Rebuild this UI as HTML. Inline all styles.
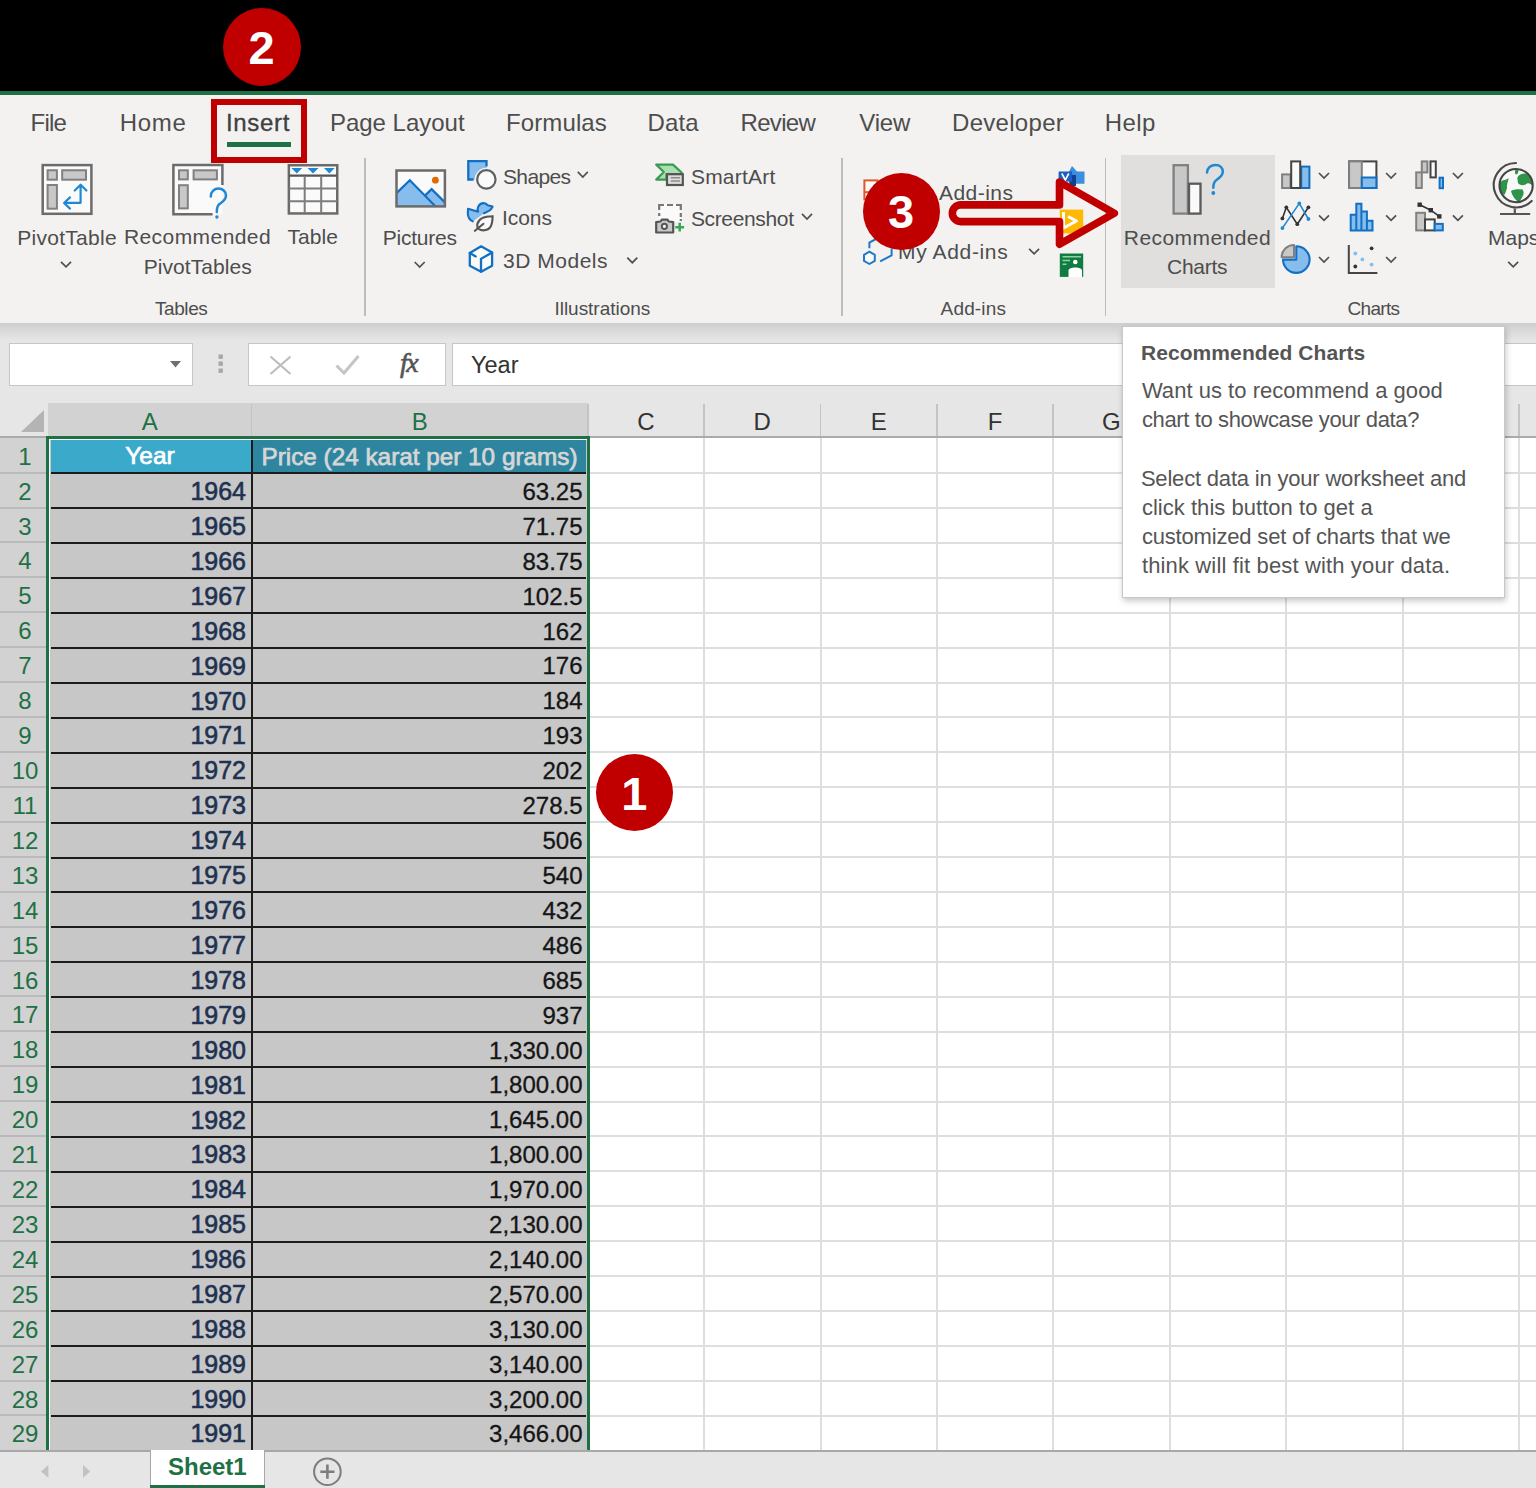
<!DOCTYPE html>
<html><head><meta charset="utf-8"><style>
html,body{margin:0;padding:0;}
body{width:1536px;height:1488px;position:relative;overflow:hidden;background:#fff;font-family:"Liberation Sans", sans-serif;}
body>div{position:absolute;}
</style></head><body>
<div style="left:0px;top:0px;width:1536px;height:91px;background:#000"></div><div style="left:0px;top:91px;width:1536px;height:4px;background:#1e7145"></div><div style="left:0px;top:95px;width:1536px;height:228px;background:#f3f2f1"></div><div style="left:0px;top:323px;width:1536px;height:80px;background:#e6e6e6"></div><div style="left:0px;top:323px;width:1536px;height:1px;background:#d0d0d0"></div><div style="left:0px;top:324px;width:1536px;height:16px;background:linear-gradient(#cfcfcf,#e6e6e6)"></div><div style="left:30.6px;top:110.68px;font-size:24px;line-height:24px;color:#4d4d4d;font-weight:normal;white-space:pre;letter-spacing:-0.841px;">File</div><div style="left:119.7px;top:110.68px;font-size:24px;line-height:24px;color:#4d4d4d;font-weight:normal;white-space:pre;letter-spacing:0.709px;">Home</div><div style="left:226px;top:110.68px;font-size:24px;line-height:24px;color:#404040;font-weight:normal;white-space:pre;letter-spacing:0.669px;-webkit-text-stroke:0.35px #404040">Insert</div><div style="left:329.9px;top:110.68px;font-size:24px;line-height:24px;color:#4d4d4d;font-weight:normal;white-space:pre;letter-spacing:-0.011px;">Page Layout</div><div style="left:506px;top:110.68px;font-size:24px;line-height:24px;color:#4d4d4d;font-weight:normal;white-space:pre;letter-spacing:0.111px;">Formulas</div><div style="left:647.6px;top:110.68px;font-size:24px;line-height:24px;color:#4d4d4d;font-weight:normal;white-space:pre;letter-spacing:0.084px;">Data</div><div style="left:740.6px;top:110.68px;font-size:24px;line-height:24px;color:#4d4d4d;font-weight:normal;white-space:pre;letter-spacing:-0.712px;">Review</div><div style="left:859.3px;top:110.68px;font-size:24px;line-height:24px;color:#4d4d4d;font-weight:normal;white-space:pre;letter-spacing:-0.185px;">View</div><div style="left:952px;top:110.68px;font-size:24px;line-height:24px;color:#4d4d4d;font-weight:normal;white-space:pre;letter-spacing:0.3px;">Developer</div><div style="left:1104.7px;top:110.68px;font-size:24px;line-height:24px;color:#4d4d4d;font-weight:normal;white-space:pre;letter-spacing:0.396px;">Help</div><div style="left:227px;top:142px;width:64px;height:5px;background:#1e7145"></div><div style="left:363.8px;top:157.5px;width:1.8px;height:158.5px;background:#bdbcbb"></div><div style="left:841.3px;top:157.5px;width:1.8px;height:158.5px;background:#bdbcbb"></div><div style="left:1104.7px;top:157.5px;width:1.8px;height:158.5px;background:#bdbcbb"></div><div style="left:17.2px;top:226.62px;font-size:21px;line-height:21px;color:#4d4d4d;font-weight:normal;white-space:pre;letter-spacing:0.277px;">PivotTable</div><div style="left:123.9px;top:226.42px;font-size:21px;line-height:21px;color:#4d4d4d;font-weight:normal;white-space:pre;letter-spacing:0.437px;">Recommended</div><div style="left:143.7px;top:255.82px;font-size:21px;line-height:21px;color:#4d4d4d;font-weight:normal;white-space:pre;letter-spacing:0.071px;">PivotTables</div><div style="left:287.4px;top:226.42px;font-size:21px;line-height:21px;color:#4d4d4d;font-weight:normal;white-space:pre;letter-spacing:0.094px;">Table</div><div style="left:382.7px;top:226.62px;font-size:21px;line-height:21px;color:#4d4d4d;font-weight:normal;white-space:pre;letter-spacing:-0.208px;">Pictures</div><div style="left:503.0px;top:165.62px;font-size:21px;line-height:21px;color:#4d4d4d;font-weight:normal;white-space:pre;letter-spacing:-0.645px;">Shapes</div><div style="left:502px;top:207.32px;font-size:21px;line-height:21px;color:#4d4d4d;font-weight:normal;white-space:pre;letter-spacing:-0.073px;">Icons</div><div style="left:503.0px;top:249.82px;font-size:21px;line-height:21px;color:#4d4d4d;font-weight:normal;white-space:pre;letter-spacing:0.516px;">3D Models</div><div style="left:690.9px;top:165.92px;font-size:21px;line-height:21px;color:#4d4d4d;font-weight:normal;white-space:pre;letter-spacing:0.228px;">SmartArt</div><div style="left:690.9px;top:207.82px;font-size:21px;line-height:21px;color:#4d4d4d;font-weight:normal;white-space:pre;letter-spacing:-0.344px;">Screenshot</div><div style="left:938.9px;top:182.22px;font-size:21px;line-height:21px;color:#4d4d4d;font-weight:normal;white-space:pre;letter-spacing:0.483px;">Add-ins</div><div style="left:898px;top:240.52px;font-size:21px;line-height:21px;color:#4d4d4d;font-weight:normal;white-space:pre;letter-spacing:0.641px;">My Add-ins</div><div style="left:1121px;top:155px;width:154px;height:133px;background:#e1dfdd"></div><div style="left:1123.8px;top:226.62px;font-size:21px;line-height:21px;color:#4d4d4d;font-weight:normal;white-space:pre;letter-spacing:0.447px;">Recommended</div><div style="left:1167px;top:255.82px;font-size:21px;line-height:21px;color:#4d4d4d;font-weight:normal;white-space:pre;letter-spacing:-0.25px;">Charts</div><div style="left:1488px;top:226.52px;font-size:21px;line-height:21px;color:#4d4d4d;font-weight:normal;white-space:pre;">Maps</div><div style="left:154.9px;top:299.12px;font-size:19px;line-height:19px;color:#4d4d4d;font-weight:normal;white-space:pre;letter-spacing:-0.404px;">Tables</div><div style="left:554.5px;top:299.12px;font-size:19px;line-height:19px;color:#4d4d4d;font-weight:normal;white-space:pre;letter-spacing:-0.033px;">Illustrations</div><div style="left:940.6px;top:299.12px;font-size:19px;line-height:19px;color:#4d4d4d;font-weight:normal;white-space:pre;letter-spacing:0.146px;">Add-ins</div><div style="left:1347.5px;top:298.92px;font-size:19px;line-height:19px;color:#4d4d4d;font-weight:normal;white-space:pre;letter-spacing:-0.692px;">Charts</div><svg style="position:absolute;left:0;top:0" width="1536" height="1488" viewBox="0 0 1536 1488"><rect x="42.7" y="165.1" width="48.7" height="48.7" fill="#fafafa" stroke="#6b6b6b" stroke-width="2.5"/><rect x="47.6" y="170.25" width="9.3" height="9.45" fill="#c8c8c8" stroke="#808080" stroke-width="2"/><rect x="62.2" y="170.25" width="23.8" height="9.45" fill="#c8c8c8" stroke="#808080" stroke-width="2"/><rect x="47.6" y="185" width="9.3" height="23.7" fill="#c8c8c8" stroke="#808080" stroke-width="2"/><path d="M80.6 185.5 V202.8 H64.8 M74.75 190.5 L80.6 184.7 L86.4 190.5 M70 197.4 L64.1 203 L70 208.6" stroke="#1e88d4" stroke-width="2.2" fill="none" stroke-linecap="round" stroke-linejoin="round"/><rect x="173.4" y="165" width="49" height="49.2" fill="#fafafa"/><path d="M212.6 214.2 H173.4 V165 H222.4 V185" stroke="#6b6b6b" stroke-width="2.5" fill="none"/><rect x="179" y="170.3" width="8.8" height="9.1" fill="#c8c8c8" stroke="#808080" stroke-width="2"/><rect x="193.6" y="170.3" width="23.3" height="9.1" fill="#c8c8c8" stroke="#808080" stroke-width="2"/><rect x="179" y="185.2" width="8.8" height="23.2" fill="#c8c8c8" stroke="#808080" stroke-width="2"/><path d="M210.8 196.5 C210.8 191.5 214.5 188.6 218.5 188.6 C222.5 188.6 226 191.5 226 195.5 C226 200 222.5 201.8 219.5 204 C217.2 205.8 216.8 208 216.8 212" stroke="#1e88d4" stroke-width="2.5" fill="none" stroke-linecap="round"/><circle cx="216.9" cy="217" r="1.7" fill="#1e88d4"/><rect x="288.85" y="165.25" width="48.4" height="48.2" fill="#fafafa" stroke="#6b6b6b" stroke-width="2.5"/><path d="M289 175.7 H337" stroke="#555" stroke-width="2.2"/><path d="M289 188.4 H337 M289 201.3 H337 M304.7 176 V213 M321.2 176 V213" stroke="#7d7d7d" stroke-width="2"/><path d="M291.4 168 H302.2 L296.8 173.4 Z M307.6 168 H318.5 L313 173.4 Z M324 168 H334.7 L329.4 173.4 Z" fill="#1e88d4"/><rect x="396.5" y="170.5" width="48.4" height="35.9" fill="#fafafa"/><path d="M396.5 193.1 L409.8 180.2 L435.6 206.4 H396.5 Z M425.5 195.1 L431.6 189.1 L444.9 202.4 V206.4 H435.6 Z" fill="#86bdec"/><path d="M396.5 193.1 L409.8 180.2 L435.6 206.4 M425.5 195.1 L431.6 189.1 L444.9 202.4" stroke="#1170c4" stroke-width="2.2" fill="none"/><rect x="396.5" y="170.5" width="48.4" height="35.9" fill="none" stroke="#6b6b6b" stroke-width="2.5"/><circle cx="435.4" cy="180.2" r="3.4" fill="#e06a00"/><rect x="468.3" y="161.2" width="18.2" height="18.3" fill="#86bdec"/><path d="M486.5 166.5 V161.2 H468.3 V179.5 H473.6" stroke="#1170c4" stroke-width="2.3" fill="none"/><circle cx="486.35" cy="179.4" r="9.2" fill="#fafafa" stroke="#f3f2f1" stroke-width="5"/><circle cx="486.35" cy="179.4" r="9.2" fill="#fafafa" stroke="#5f5f5f" stroke-width="2.2"/><path d="M472.75 221.4 C469.5 220 467.9 217.5 467.8 213 L468.05 208.75 L478.1 211.7 C477.3 209.5 477.5 207.8 478.3 206.5 C479.5 204 481.5 203.1 483.5 203.1 C485.5 203.1 486.9 204 487.6 205.2 L492.6 206.6 C491.8 208.6 490.5 210 488.9 210.9 L484 213.2 L472.75 221.4 Z" fill="#86bdec"/><path d="M472.75 221.4 C469.5 220 467.9 217.5 467.8 213 L468.05 208.75 L478.1 211.7 C477.3 209.5 477.5 207.8 478.3 206.5 C479.5 204 481.5 203.1 483.5 203.1 C485.5 203.1 486.9 204 487.6 205.2 L492.6 206.6 C491.8 208.6 490.5 210 488.9 210.9 L484 213.2" fill="none" stroke="#1170c4" stroke-width="2.1" stroke-linejoin="round" stroke-linecap="round"/><path d="M492.6 216.3 C485.5 216.3 478.6 217.6 477.2 224.6 C476.8 228.3 479.4 230.6 484.6 230.3 C490.4 229.6 492.4 225.5 492.6 216.3 Z" fill="#fafafa" stroke="#f3f2f1" stroke-width="4"/><path d="M492.6 216.3 C485.5 216.3 478.6 217.6 477.2 224.6 C476.8 228.3 479.4 230.6 484.6 230.3 C490.4 229.6 492.4 225.5 492.6 216.3 Z M474.9 230.8 L483.5 223.8" fill="#fafafa" stroke="#555" stroke-width="2.1" stroke-linecap="round"/><path d="M481.1 246.3 L492.1 252.6 V265.8 L481.1 271.7 L469.8 265.8 V252.9 Z" fill="#fafafa" stroke="#1170c4" stroke-width="2.3" stroke-linejoin="round"/><path d="M492.1 252.6 L481 258.8 V271.7 M469.8 252.9 L475.7 256.4" stroke="#1170c4" stroke-width="2.3" fill="none" stroke-linecap="round"/><path d="M656.2 164.6 H673 L681.6 172.5 V174 H666.5 V179.6 H656.2 L663.8 172 Z" fill="#a8e0b0" stroke="#3a9a54" stroke-width="2.2" stroke-linejoin="round"/><rect x="667" y="174.2" width="15.8" height="10.8" fill="#dcdcdc" stroke="#555" stroke-width="2.2"/><path d="M670.8 177.8 H680 M670.8 181 H680" stroke="#8a8a8a" stroke-width="1.5"/><rect x="659.2" y="204" width="21.6" height="18" fill="#fafafa"/><path d="M659.2 210 V205 H664 M667 205 H673 M676 205 H680.8 V210 M659.2 213 V216 M680.8 213 V217 M680.8 219 V221" stroke="#777" stroke-width="2.2" fill="none"/><path d="M656.2 232.5 V222.2 L660.5 221.5 L661.8 219.6 H667.5 L668.8 221.5 L673.2 222.2 V232.5 Z" fill="#c8c8c8" stroke="#555" stroke-width="2.2" stroke-linejoin="round"/><circle cx="664.4" cy="226.3" r="2.6" fill="#fafafa" stroke="#555" stroke-width="2"/><path d="M675.3 227.2 H684.1 M679.7 222.8 V231.6" stroke="#3aa657" stroke-width="2.5"/><rect x="864.4" y="180.4" width="13" height="19" fill="#fafafa" stroke="#e0582a" stroke-width="2"/><path d="M864.4 192.2 H877" stroke="#e0582a" stroke-width="2"/><path d="M869.4 248.3 V242.5 L876 239 M891.6 248.6 V255.3 L880.2 261.4" stroke="#1f78c8" stroke-width="2" fill="none"/><path d="M869.4 251.7 L874.8 254.8 V260.9 L869.4 264 L864 260.9 V254.8 Z" fill="#fafafa" stroke="#1f78c8" stroke-width="2" stroke-linejoin="round"/><path d="M1072 166 L1077 171.5 H1084.5 V183.8 H1069 V171.5 Z" fill="#3b8ee0"/><path d="M1069 175 H1076 V186 H1070 Z" fill="#0f3f8f"/><rect x="1058.6" y="171.5" width="13.5" height="10" fill="#1d5fc0"/><path d="M1061.8 173.5 L1065.3 180 L1068.8 173.5" stroke="#fff" stroke-width="1.6" fill="none"/><rect x="1059.8" y="209.6" width="23.4" height="23.8" fill="#ffb900"/><path d="M1063.5 212 V228 L1076.5 221 L1068 216.5" stroke="#fff" stroke-width="3" fill="none" stroke-linejoin="round"/><rect x="1059.8" y="253.5" width="23.4" height="23.4" fill="#107c41"/><path d="M1062.5 256.8 H1081 M1062.5 260.6 H1070 M1062.5 264.2 H1066.5" stroke="#8fd1a8" stroke-width="1.5"/><circle cx="1075.3" cy="262" r="2.3" fill="#fff"/><path d="M1068.5 276.9 V270.5 C1068.5 266.5 1082 266.5 1082 270.5 V276.9 Z" fill="#fff"/><rect x="1173.6" y="165.2" width="14.3" height="48.4" fill="#c8c8c8" stroke="#808080" stroke-width="2.3"/><rect x="1189" y="183.7" width="11.5" height="29.9" fill="#fafafa" stroke="#5a5a5a" stroke-width="2.3"/><path d="M1207 172.6 C1207 168 1211 164.9 1215.5 164.9 C1220 164.9 1222.8 168 1222.8 171.8 C1222.8 176 1219 178 1216.5 180 C1213.5 182 1213.3 184.5 1213.3 187.7" stroke="#1e88d4" stroke-width="2.5" fill="none" stroke-linecap="round"/><circle cx="1213.3" cy="193" r="1.9" fill="#1e88d4"/><rect x="1282.1" y="174.4" width="8.4" height="13.6" fill="#c8c8c8" stroke="#808080" stroke-width="2"/><rect x="1301.2" y="166.6" width="8.2" height="21.4" fill="#86bdec" stroke="#1170c4" stroke-width="2"/><rect x="1291.2" y="161.4" width="9" height="26.6" fill="#fafafa" stroke="#444" stroke-width="2"/><rect x="1349.1" y="161.4" width="27.3" height="26.6" fill="#fafafa" stroke="#444" stroke-width="2"/><rect x="1349.1" y="161.4" width="12.7" height="26.6" fill="#c8c8c8" stroke="#808080" stroke-width="2"/><rect x="1361.8" y="177.5" width="14.6" height="10.5" fill="#86bdec" stroke="#1170c4" stroke-width="2"/><rect x="1421.8" y="161.4" width="5.6" height="11" fill="#c8c8c8" stroke="#808080" stroke-width="2"/><rect x="1416.2" y="172.4" width="5.6" height="15.6" fill="#c8c8c8" stroke="#808080" stroke-width="2"/><rect x="1430.5" y="161.4" width="5.3" height="16" fill="#fafafa" stroke="#444" stroke-width="2"/><rect x="1439.6" y="177.7" width="3.4" height="10.5" fill="#86bdec" stroke="#1170c4" stroke-width="2"/><path d="M1282.4 218.4 L1286.3 207.3 L1297.3 224.2 L1308.4 207.3" stroke="#333" stroke-width="1.6" fill="none"/><path d="M1282.4 228.1 L1299.3 203.4 L1308.4 219" stroke="#1e88d4" stroke-width="1.6" fill="none"/><circle cx="1282.4" cy="218.4" r="1.9" fill="#333"/><circle cx="1286.3" cy="207.3" r="1.9" fill="#333"/><circle cx="1297.3" cy="224.2" r="1.9" fill="#333"/><circle cx="1308.4" cy="207.3" r="1.9" fill="#333"/><circle cx="1282.4" cy="228.1" r="1.9" fill="#1e88d4"/><circle cx="1299.3" cy="203.4" r="1.9" fill="#1e88d4"/><circle cx="1308.4" cy="219" r="1.9" fill="#1e88d4"/><path d="M1350.7 230.4 V214.8 H1356.3 V203.7 H1361.4 V211.5 H1366.9 V220.7 H1372.5 V230.4 Z M1356.3 214.8 V230.4 M1361.4 211.5 V230.4 M1366.9 220.7 V230.4" fill="#86bdec" stroke="#1170c4" stroke-width="2" stroke-linejoin="miter"/><rect x="1416.2" y="212.8" width="8.8" height="17.6" fill="#c8c8c8" stroke="#808080" stroke-width="2"/><rect x="1425" y="219.4" width="9.7" height="11" fill="#fafafa" stroke="#444" stroke-width="2"/><rect x="1434.7" y="223.9" width="8.1" height="6.5" fill="#86bdec" stroke="#1170c4" stroke-width="2"/><path d="M1419.7 204.7 L1430.8 210.2 L1439.3 216.4" stroke="#333" stroke-width="1.6" fill="none"/><rect x="1417.5" y="202.5" width="4.4" height="4.4" fill="#333"/><rect x="1428.6" y="208.0" width="4.4" height="4.4" fill="#333"/><rect x="1437.1" y="214.20000000000002" width="4.4" height="4.4" fill="#333"/><path d="M1296.3 259.6 V246.3 A13.3 13.3 0 1 1 1283 259.6 Z" fill="#86bdec" stroke="#1170c4" stroke-width="2.1" stroke-linejoin="round"/><path d="M1294 257.3 H1281.6 A12.4 12.4 0 0 1 1294 244.9 Z" fill="#c8c8c8" stroke="#808080" stroke-width="2" stroke-linejoin="round"/><path d="M1348.8 245 V273 H1377.4" stroke="#444" stroke-width="2" fill="none"/><circle cx="1371.6" cy="248.3" r="1.9" fill="#333"/><circle cx="1355.3" cy="253.5" r="1.9" fill="#7fbff0"/><circle cx="1362.4" cy="259.4" r="1.9" fill="#7fbff0"/><circle cx="1371.6" cy="264.6" r="1.9" fill="#7fbff0"/><circle cx="1355.3" cy="266.5" r="1.9" fill="#333"/><clipPath id="gclip"><circle cx="1516.1" cy="185.6" r="16.4"/></clipPath><path d="M1516 163 A22.2 22.2 0 1 0 1531.7 200.9" stroke="#4a4a4a" stroke-width="2.1" fill="none" stroke-linecap="round"/><circle cx="1516.1" cy="185.6" r="16.6" fill="#f8f8f8"/><g clip-path="url(#gclip)" fill="#2f9448"><path d="M1499 186 C1499 182 1503 179.5 1505 180 L1508.7 178.3 C1508 182 1506.5 185 1507 188 C1506 191 1505.5 194 1504 195 C1501.5 193 1499 190 1499 186 Z"/><path d="M1517.3 178 C1518 174.5 1523 173.2 1527 173.5 C1531 175 1534 179 1534 187 C1531 184 1529 182.5 1527 183.5 C1524 186 1519.5 185.5 1518 183 Z"/><path d="M1511 191 C1513 189.3 1519 189 1522.5 189.5 C1524 191 1524 194 1522.5 196.5 C1521.5 199 1520 201 1518.5 202.5 C1516 200 1512.5 197 1511 191 Z"/><path d="M1515 171 C1515.5 169.6 1517.5 169.2 1518.6 170 C1518.5 172.5 1517.5 174.5 1516 174.6 C1515 173.8 1514.8 172.5 1515 171 Z"/></g><circle cx="1516.1" cy="185.6" r="16.6" fill="none" stroke="#444" stroke-width="2.1"/><path d="M1514.8 208.5 V214 M1500 214 H1530.2" stroke="#555" stroke-width="2.2"/><path d="M61 261.8 L66 266.9 L71 261.8" stroke="#505050" stroke-width="1.7" fill="none"/><path d="M414.7 262.0 L419.7 267.09999999999997 L424.7 262.0" stroke="#505050" stroke-width="1.7" fill="none"/><path d="M577.8 171.9 L582.8 177.0 L587.8 171.9" stroke="#505050" stroke-width="1.7" fill="none"/><path d="M627.3 257.6 L632.3 262.7 L637.3 257.6" stroke="#505050" stroke-width="1.7" fill="none"/><path d="M802 213.9 L807 219.0 L812 213.9" stroke="#505050" stroke-width="1.7" fill="none"/><path d="M1029.1 248.8 L1034.1 253.9 L1039.1 248.8" stroke="#505050" stroke-width="1.7" fill="none"/><path d="M1508.2 261.8 L1513.2 266.9 L1518.2 261.8" stroke="#505050" stroke-width="1.7" fill="none"/><path d="M1319 173.0 L1324 178.1 L1329 173.0" stroke="#505050" stroke-width="1.7" fill="none"/><path d="M1386.1 173.0 L1391.1 178.1 L1396.1 173.0" stroke="#505050" stroke-width="1.7" fill="none"/><path d="M1452.9 173.0 L1457.9 178.1 L1462.9 173.0" stroke="#505050" stroke-width="1.7" fill="none"/><path d="M1319 215.3 L1324 220.4 L1329 215.3" stroke="#505050" stroke-width="1.7" fill="none"/><path d="M1386.1 215.3 L1391.1 220.4 L1396.1 215.3" stroke="#505050" stroke-width="1.7" fill="none"/><path d="M1452.9 215.3 L1457.9 220.4 L1462.9 215.3" stroke="#505050" stroke-width="1.7" fill="none"/><path d="M1319 257.0 L1324 262.09999999999997 L1329 257.0" stroke="#505050" stroke-width="1.7" fill="none"/><path d="M1386.1 257.0 L1391.1 262.09999999999997 L1396.1 257.0" stroke="#505050" stroke-width="1.7" fill="none"/></svg><div style="left:9px;top:342.5px;width:184px;height:43px;background:#fff;border:1px solid #c6c6c6;box-sizing:border-box"></div><div style="left:248px;top:342.5px;width:198px;height:43px;background:#fff;border:1px solid #c6c6c6;box-sizing:border-box"></div><div style="left:452px;top:342.5px;width:1100px;height:43px;background:#fff;border:1px solid #c6c6c6;box-sizing:border-box"></div><div style="left:471px;top:353.51px;font-size:23.5px;line-height:23.5px;color:#333;font-weight:normal;white-space:pre;">Year</div><div style="left:0px;top:403px;width:1536px;height:34px;background:#e6e6e6"></div><div style="left:48px;top:403px;width:540px;height:34px;background:#d2d2d2"></div><div style="left:250.5px;top:404px;width:1.5px;height:33px;background:#c4c4c4"></div><div style="left:-350.25px;width:1000px;text-align:center;top:410.48px;font-size:24px;line-height:24px;color:#1e7145;font-weight:normal;white-space:pre;">A</div><div style="left:587px;top:404px;width:1.5px;height:33px;background:#c4c4c4"></div><div style="left:-80.25px;width:1000px;text-align:center;top:410.48px;font-size:24px;line-height:24px;color:#1e7145;font-weight:normal;white-space:pre;">B</div><div style="left:703px;top:404px;width:1.5px;height:33px;background:#c4c4c4"></div><div style="left:146.0px;width:1000px;text-align:center;top:410.48px;font-size:24px;line-height:24px;color:#333;font-weight:normal;white-space:pre;">C</div><div style="left:819.5px;top:404px;width:1.5px;height:33px;background:#c4c4c4"></div><div style="left:262.25px;width:1000px;text-align:center;top:410.48px;font-size:24px;line-height:24px;color:#333;font-weight:normal;white-space:pre;">D</div><div style="left:936px;top:404px;width:1.5px;height:33px;background:#c4c4c4"></div><div style="left:378.75px;width:1000px;text-align:center;top:410.48px;font-size:24px;line-height:24px;color:#333;font-weight:normal;white-space:pre;">E</div><div style="left:1052.2px;top:404px;width:1.5px;height:33px;background:#c4c4c4"></div><div style="left:495.1px;width:1000px;text-align:center;top:410.48px;font-size:24px;line-height:24px;color:#333;font-weight:normal;white-space:pre;">F</div><div style="left:1168.6px;top:404px;width:1.5px;height:33px;background:#c4c4c4"></div><div style="left:611.4000000000001px;width:1000px;text-align:center;top:410.48px;font-size:24px;line-height:24px;color:#333;font-weight:normal;white-space:pre;">G</div><div style="left:1285px;top:404px;width:1.5px;height:33px;background:#c4c4c4"></div><div style="left:1401.5px;top:404px;width:1.5px;height:33px;background:#c4c4c4"></div><div style="left:1518px;top:404px;width:1.5px;height:33px;background:#c4c4c4"></div><div style="left:1634.5px;top:404px;width:1.5px;height:33px;background:#c4c4c4"></div><div style="left:0px;top:436px;width:1536px;height:1.5px;background:#ababab"></div><div style="left:0px;top:438px;width:1536px;height:1012px;background:#fff"></div><div style="left:0px;top:438px;width:47px;height:1012px;background:#d2d2d2"></div><div style="left:0px;top:472px;width:47px;height:2px;background:#bababa"></div><div style="left:590px;top:472px;width:946px;height:2px;background:#dedede"></div><div style="left:0px;top:507px;width:47px;height:2px;background:#bababa"></div><div style="left:590px;top:507px;width:946px;height:2px;background:#dedede"></div><div style="left:0px;top:541px;width:47px;height:2px;background:#bababa"></div><div style="left:590px;top:542px;width:946px;height:2px;background:#dedede"></div><div style="left:0px;top:576px;width:47px;height:2px;background:#bababa"></div><div style="left:590px;top:577px;width:946px;height:2px;background:#dedede"></div><div style="left:0px;top:611px;width:47px;height:2px;background:#bababa"></div><div style="left:590px;top:612px;width:946px;height:2px;background:#dedede"></div><div style="left:0px;top:646px;width:47px;height:2px;background:#bababa"></div><div style="left:590px;top:647px;width:946px;height:2px;background:#dedede"></div><div style="left:0px;top:681px;width:47px;height:2px;background:#bababa"></div><div style="left:590px;top:682px;width:946px;height:2px;background:#dedede"></div><div style="left:0px;top:716px;width:47px;height:2px;background:#bababa"></div><div style="left:590px;top:716px;width:946px;height:2px;background:#dedede"></div><div style="left:0px;top:751px;width:47px;height:2px;background:#bababa"></div><div style="left:590px;top:751px;width:946px;height:2px;background:#dedede"></div><div style="left:0px;top:786px;width:47px;height:2px;background:#bababa"></div><div style="left:590px;top:786px;width:946px;height:2px;background:#dedede"></div><div style="left:0px;top:821px;width:47px;height:2px;background:#bababa"></div><div style="left:590px;top:821px;width:946px;height:2px;background:#dedede"></div><div style="left:0px;top:856px;width:47px;height:2px;background:#bababa"></div><div style="left:590px;top:856px;width:946px;height:2px;background:#dedede"></div><div style="left:0px;top:891px;width:47px;height:2px;background:#bababa"></div><div style="left:590px;top:891px;width:946px;height:2px;background:#dedede"></div><div style="left:0px;top:926px;width:47px;height:2px;background:#bababa"></div><div style="left:590px;top:926px;width:946px;height:2px;background:#dedede"></div><div style="left:0px;top:960px;width:47px;height:2px;background:#bababa"></div><div style="left:590px;top:961px;width:946px;height:2px;background:#dedede"></div><div style="left:0px;top:995px;width:47px;height:2px;background:#bababa"></div><div style="left:590px;top:996px;width:946px;height:2px;background:#dedede"></div><div style="left:0px;top:1030px;width:47px;height:2px;background:#bababa"></div><div style="left:590px;top:1031px;width:946px;height:2px;background:#dedede"></div><div style="left:0px;top:1065px;width:47px;height:2px;background:#bababa"></div><div style="left:590px;top:1066px;width:946px;height:2px;background:#dedede"></div><div style="left:0px;top:1100px;width:47px;height:2px;background:#bababa"></div><div style="left:590px;top:1101px;width:946px;height:2px;background:#dedede"></div><div style="left:0px;top:1135px;width:47px;height:2px;background:#bababa"></div><div style="left:590px;top:1135px;width:946px;height:2px;background:#dedede"></div><div style="left:0px;top:1170px;width:47px;height:2px;background:#bababa"></div><div style="left:590px;top:1170px;width:946px;height:2px;background:#dedede"></div><div style="left:0px;top:1205px;width:47px;height:2px;background:#bababa"></div><div style="left:590px;top:1205px;width:946px;height:2px;background:#dedede"></div><div style="left:0px;top:1240px;width:47px;height:2px;background:#bababa"></div><div style="left:590px;top:1240px;width:946px;height:2px;background:#dedede"></div><div style="left:0px;top:1275px;width:47px;height:2px;background:#bababa"></div><div style="left:590px;top:1275px;width:946px;height:2px;background:#dedede"></div><div style="left:0px;top:1310px;width:47px;height:2px;background:#bababa"></div><div style="left:590px;top:1310px;width:946px;height:2px;background:#dedede"></div><div style="left:0px;top:1345px;width:47px;height:2px;background:#bababa"></div><div style="left:590px;top:1345px;width:946px;height:2px;background:#dedede"></div><div style="left:0px;top:1380px;width:47px;height:2px;background:#bababa"></div><div style="left:590px;top:1380px;width:946px;height:2px;background:#dedede"></div><div style="left:0px;top:1414px;width:47px;height:2px;background:#bababa"></div><div style="left:590px;top:1415px;width:946px;height:2px;background:#dedede"></div><div style="left:703px;top:438px;width:2px;height:1012px;background:#dedede"></div><div style="left:820px;top:438px;width:2px;height:1012px;background:#dedede"></div><div style="left:936px;top:438px;width:2px;height:1012px;background:#dedede"></div><div style="left:1052px;top:438px;width:2px;height:1012px;background:#dedede"></div><div style="left:1169px;top:438px;width:2px;height:1012px;background:#dedede"></div><div style="left:1285px;top:438px;width:2px;height:1012px;background:#dedede"></div><div style="left:1402px;top:438px;width:2px;height:1012px;background:#dedede"></div><div style="left:1518px;top:438px;width:2px;height:1012px;background:#dedede"></div><div style="left:1634px;top:438px;width:2px;height:1012px;background:#dedede"></div><div style="left:-475px;width:1000px;text-align:center;top:444.93px;font-size:24px;line-height:24px;color:#1e7145;font-weight:normal;white-space:pre;">1</div><div style="left:-475px;width:1000px;text-align:center;top:479.64px;font-size:24px;line-height:24px;color:#1e7145;font-weight:normal;white-space:pre;">2</div><div style="left:-475px;width:1000px;text-align:center;top:514.56px;font-size:24px;line-height:24px;color:#1e7145;font-weight:normal;white-space:pre;">3</div><div style="left:-475px;width:1000px;text-align:center;top:549.48px;font-size:24px;line-height:24px;color:#1e7145;font-weight:normal;white-space:pre;">4</div><div style="left:-475px;width:1000px;text-align:center;top:584.40px;font-size:24px;line-height:24px;color:#1e7145;font-weight:normal;white-space:pre;">5</div><div style="left:-475px;width:1000px;text-align:center;top:619.32px;font-size:24px;line-height:24px;color:#1e7145;font-weight:normal;white-space:pre;">6</div><div style="left:-475px;width:1000px;text-align:center;top:654.24px;font-size:24px;line-height:24px;color:#1e7145;font-weight:normal;white-space:pre;">7</div><div style="left:-475px;width:1000px;text-align:center;top:689.16px;font-size:24px;line-height:24px;color:#1e7145;font-weight:normal;white-space:pre;">8</div><div style="left:-475px;width:1000px;text-align:center;top:724.08px;font-size:24px;line-height:24px;color:#1e7145;font-weight:normal;white-space:pre;">9</div><div style="left:-475px;width:1000px;text-align:center;top:759.00px;font-size:24px;line-height:24px;color:#1e7145;font-weight:normal;white-space:pre;">10</div><div style="left:-475px;width:1000px;text-align:center;top:793.92px;font-size:24px;line-height:24px;color:#1e7145;font-weight:normal;white-space:pre;">11</div><div style="left:-475px;width:1000px;text-align:center;top:828.84px;font-size:24px;line-height:24px;color:#1e7145;font-weight:normal;white-space:pre;">12</div><div style="left:-475px;width:1000px;text-align:center;top:863.76px;font-size:24px;line-height:24px;color:#1e7145;font-weight:normal;white-space:pre;">13</div><div style="left:-475px;width:1000px;text-align:center;top:898.68px;font-size:24px;line-height:24px;color:#1e7145;font-weight:normal;white-space:pre;">14</div><div style="left:-475px;width:1000px;text-align:center;top:933.60px;font-size:24px;line-height:24px;color:#1e7145;font-weight:normal;white-space:pre;">15</div><div style="left:-475px;width:1000px;text-align:center;top:968.52px;font-size:24px;line-height:24px;color:#1e7145;font-weight:normal;white-space:pre;">16</div><div style="left:-475px;width:1000px;text-align:center;top:1003.44px;font-size:24px;line-height:24px;color:#1e7145;font-weight:normal;white-space:pre;">17</div><div style="left:-475px;width:1000px;text-align:center;top:1038.36px;font-size:24px;line-height:24px;color:#1e7145;font-weight:normal;white-space:pre;">18</div><div style="left:-475px;width:1000px;text-align:center;top:1073.28px;font-size:24px;line-height:24px;color:#1e7145;font-weight:normal;white-space:pre;">19</div><div style="left:-475px;width:1000px;text-align:center;top:1108.20px;font-size:24px;line-height:24px;color:#1e7145;font-weight:normal;white-space:pre;">20</div><div style="left:-475px;width:1000px;text-align:center;top:1143.12px;font-size:24px;line-height:24px;color:#1e7145;font-weight:normal;white-space:pre;">21</div><div style="left:-475px;width:1000px;text-align:center;top:1178.04px;font-size:24px;line-height:24px;color:#1e7145;font-weight:normal;white-space:pre;">22</div><div style="left:-475px;width:1000px;text-align:center;top:1212.96px;font-size:24px;line-height:24px;color:#1e7145;font-weight:normal;white-space:pre;">23</div><div style="left:-475px;width:1000px;text-align:center;top:1247.88px;font-size:24px;line-height:24px;color:#1e7145;font-weight:normal;white-space:pre;">24</div><div style="left:-475px;width:1000px;text-align:center;top:1282.80px;font-size:24px;line-height:24px;color:#1e7145;font-weight:normal;white-space:pre;">25</div><div style="left:-475px;width:1000px;text-align:center;top:1317.72px;font-size:24px;line-height:24px;color:#1e7145;font-weight:normal;white-space:pre;">26</div><div style="left:-475px;width:1000px;text-align:center;top:1352.64px;font-size:24px;line-height:24px;color:#1e7145;font-weight:normal;white-space:pre;">27</div><div style="left:-475px;width:1000px;text-align:center;top:1387.56px;font-size:24px;line-height:24px;color:#1e7145;font-weight:normal;white-space:pre;">28</div><div style="left:-475px;width:1000px;text-align:center;top:1422.10px;font-size:24px;line-height:24px;color:#1e7145;font-weight:normal;white-space:pre;">29</div><div style="left:50px;top:439px;width:537px;height:1011px;background:#c7c7c7"></div><div style="left:49.2px;top:438.8px;width:537.8px;height:1.2px;background:#fff"></div><div style="left:49.2px;top:438.8px;width:1.2px;height:1011px;background:#fff"></div><div style="left:51px;top:440px;width:200.5px;height:33px;background:#3aa9ca"></div><div style="left:252.5px;top:440px;width:333px;height:33px;background:#2d859f"></div><div style="left:51px;top:472px;width:534.5px;height:2px;background:#1c1c1c"></div><div style="left:51px;top:507px;width:534.5px;height:2px;background:#1c1c1c"></div><div style="left:51px;top:542px;width:534.5px;height:2px;background:#1c1c1c"></div><div style="left:51px;top:577px;width:534.5px;height:2px;background:#1c1c1c"></div><div style="left:51px;top:612px;width:534.5px;height:2px;background:#1c1c1c"></div><div style="left:51px;top:647px;width:534.5px;height:2px;background:#1c1c1c"></div><div style="left:51px;top:682px;width:534.5px;height:2px;background:#1c1c1c"></div><div style="left:51px;top:717px;width:534.5px;height:2px;background:#1c1c1c"></div><div style="left:51px;top:752px;width:534.5px;height:2px;background:#1c1c1c"></div><div style="left:51px;top:787px;width:534.5px;height:2px;background:#1c1c1c"></div><div style="left:51px;top:822px;width:534.5px;height:2px;background:#1c1c1c"></div><div style="left:51px;top:857px;width:534.5px;height:2px;background:#1c1c1c"></div><div style="left:51px;top:891px;width:534.5px;height:2px;background:#1c1c1c"></div><div style="left:51px;top:926px;width:534.5px;height:2px;background:#1c1c1c"></div><div style="left:51px;top:961px;width:534.5px;height:2px;background:#1c1c1c"></div><div style="left:51px;top:996px;width:534.5px;height:2px;background:#1c1c1c"></div><div style="left:51px;top:1031px;width:534.5px;height:2px;background:#1c1c1c"></div><div style="left:51px;top:1066px;width:534.5px;height:2px;background:#1c1c1c"></div><div style="left:51px;top:1101px;width:534.5px;height:2px;background:#1c1c1c"></div><div style="left:51px;top:1136px;width:534.5px;height:2px;background:#1c1c1c"></div><div style="left:51px;top:1171px;width:534.5px;height:2px;background:#1c1c1c"></div><div style="left:51px;top:1206px;width:534.5px;height:2px;background:#1c1c1c"></div><div style="left:51px;top:1241px;width:534.5px;height:2px;background:#1c1c1c"></div><div style="left:51px;top:1276px;width:534.5px;height:2px;background:#1c1c1c"></div><div style="left:51px;top:1310px;width:534.5px;height:2px;background:#1c1c1c"></div><div style="left:51px;top:1345px;width:534.5px;height:2px;background:#1c1c1c"></div><div style="left:51px;top:1380px;width:534.5px;height:2px;background:#1c1c1c"></div><div style="left:51px;top:1415px;width:534.5px;height:2px;background:#1c1c1c"></div><div style="left:250.5px;top:440px;width:2px;height:1010px;background:#1c1c1c"></div><div style="left:-350px;width:1000px;text-align:center;top:444.26px;font-size:24.5px;line-height:24.5px;color:#fff;font-weight:normal;white-space:pre;-webkit-text-stroke:0.7px #fff">Year</div><div style="left:-80.5px;width:1000px;text-align:center;top:444.63px;font-size:24.3px;line-height:24.3px;color:#d6d6d6;font-weight:normal;white-space:pre;-webkit-text-stroke:0.75px #d6d6d6">Price (24 karat per 10 grams)</div><div style="left:-754px;width:1000px;text-align:right;top:479.00px;font-size:25px;line-height:25px;color:#1f3150;font-weight:normal;white-space:pre;-webkit-text-stroke:0.6px #1f3150">1964</div><div style="left:-417.5px;width:1000px;text-align:right;top:479.84px;font-size:24px;line-height:24px;color:#151515;font-weight:normal;white-space:pre;-webkit-text-stroke:0.3px #151515">63.25</div><div style="left:-754px;width:1000px;text-align:right;top:513.92px;font-size:25px;line-height:25px;color:#1f3150;font-weight:normal;white-space:pre;-webkit-text-stroke:0.6px #1f3150">1965</div><div style="left:-417.5px;width:1000px;text-align:right;top:514.76px;font-size:24px;line-height:24px;color:#151515;font-weight:normal;white-space:pre;-webkit-text-stroke:0.3px #151515">71.75</div><div style="left:-754px;width:1000px;text-align:right;top:548.84px;font-size:25px;line-height:25px;color:#1f3150;font-weight:normal;white-space:pre;-webkit-text-stroke:0.6px #1f3150">1966</div><div style="left:-417.5px;width:1000px;text-align:right;top:549.68px;font-size:24px;line-height:24px;color:#151515;font-weight:normal;white-space:pre;-webkit-text-stroke:0.3px #151515">83.75</div><div style="left:-754px;width:1000px;text-align:right;top:583.76px;font-size:25px;line-height:25px;color:#1f3150;font-weight:normal;white-space:pre;-webkit-text-stroke:0.6px #1f3150">1967</div><div style="left:-417.5px;width:1000px;text-align:right;top:584.60px;font-size:24px;line-height:24px;color:#151515;font-weight:normal;white-space:pre;-webkit-text-stroke:0.3px #151515">102.5</div><div style="left:-754px;width:1000px;text-align:right;top:618.68px;font-size:25px;line-height:25px;color:#1f3150;font-weight:normal;white-space:pre;-webkit-text-stroke:0.6px #1f3150">1968</div><div style="left:-417.5px;width:1000px;text-align:right;top:619.52px;font-size:24px;line-height:24px;color:#151515;font-weight:normal;white-space:pre;-webkit-text-stroke:0.3px #151515">162</div><div style="left:-754px;width:1000px;text-align:right;top:653.60px;font-size:25px;line-height:25px;color:#1f3150;font-weight:normal;white-space:pre;-webkit-text-stroke:0.6px #1f3150">1969</div><div style="left:-417.5px;width:1000px;text-align:right;top:654.44px;font-size:24px;line-height:24px;color:#151515;font-weight:normal;white-space:pre;-webkit-text-stroke:0.3px #151515">176</div><div style="left:-754px;width:1000px;text-align:right;top:688.52px;font-size:25px;line-height:25px;color:#1f3150;font-weight:normal;white-space:pre;-webkit-text-stroke:0.6px #1f3150">1970</div><div style="left:-417.5px;width:1000px;text-align:right;top:689.36px;font-size:24px;line-height:24px;color:#151515;font-weight:normal;white-space:pre;-webkit-text-stroke:0.3px #151515">184</div><div style="left:-754px;width:1000px;text-align:right;top:723.44px;font-size:25px;line-height:25px;color:#1f3150;font-weight:normal;white-space:pre;-webkit-text-stroke:0.6px #1f3150">1971</div><div style="left:-417.5px;width:1000px;text-align:right;top:724.28px;font-size:24px;line-height:24px;color:#151515;font-weight:normal;white-space:pre;-webkit-text-stroke:0.3px #151515">193</div><div style="left:-754px;width:1000px;text-align:right;top:758.36px;font-size:25px;line-height:25px;color:#1f3150;font-weight:normal;white-space:pre;-webkit-text-stroke:0.6px #1f3150">1972</div><div style="left:-417.5px;width:1000px;text-align:right;top:759.20px;font-size:24px;line-height:24px;color:#151515;font-weight:normal;white-space:pre;-webkit-text-stroke:0.3px #151515">202</div><div style="left:-754px;width:1000px;text-align:right;top:793.28px;font-size:25px;line-height:25px;color:#1f3150;font-weight:normal;white-space:pre;-webkit-text-stroke:0.6px #1f3150">1973</div><div style="left:-417.5px;width:1000px;text-align:right;top:794.12px;font-size:24px;line-height:24px;color:#151515;font-weight:normal;white-space:pre;-webkit-text-stroke:0.3px #151515">278.5</div><div style="left:-754px;width:1000px;text-align:right;top:828.20px;font-size:25px;line-height:25px;color:#1f3150;font-weight:normal;white-space:pre;-webkit-text-stroke:0.6px #1f3150">1974</div><div style="left:-417.5px;width:1000px;text-align:right;top:829.04px;font-size:24px;line-height:24px;color:#151515;font-weight:normal;white-space:pre;-webkit-text-stroke:0.3px #151515">506</div><div style="left:-754px;width:1000px;text-align:right;top:863.12px;font-size:25px;line-height:25px;color:#1f3150;font-weight:normal;white-space:pre;-webkit-text-stroke:0.6px #1f3150">1975</div><div style="left:-417.5px;width:1000px;text-align:right;top:863.96px;font-size:24px;line-height:24px;color:#151515;font-weight:normal;white-space:pre;-webkit-text-stroke:0.3px #151515">540</div><div style="left:-754px;width:1000px;text-align:right;top:898.04px;font-size:25px;line-height:25px;color:#1f3150;font-weight:normal;white-space:pre;-webkit-text-stroke:0.6px #1f3150">1976</div><div style="left:-417.5px;width:1000px;text-align:right;top:898.88px;font-size:24px;line-height:24px;color:#151515;font-weight:normal;white-space:pre;-webkit-text-stroke:0.3px #151515">432</div><div style="left:-754px;width:1000px;text-align:right;top:932.96px;font-size:25px;line-height:25px;color:#1f3150;font-weight:normal;white-space:pre;-webkit-text-stroke:0.6px #1f3150">1977</div><div style="left:-417.5px;width:1000px;text-align:right;top:933.80px;font-size:24px;line-height:24px;color:#151515;font-weight:normal;white-space:pre;-webkit-text-stroke:0.3px #151515">486</div><div style="left:-754px;width:1000px;text-align:right;top:967.88px;font-size:25px;line-height:25px;color:#1f3150;font-weight:normal;white-space:pre;-webkit-text-stroke:0.6px #1f3150">1978</div><div style="left:-417.5px;width:1000px;text-align:right;top:968.72px;font-size:24px;line-height:24px;color:#151515;font-weight:normal;white-space:pre;-webkit-text-stroke:0.3px #151515">685</div><div style="left:-754px;width:1000px;text-align:right;top:1002.80px;font-size:25px;line-height:25px;color:#1f3150;font-weight:normal;white-space:pre;-webkit-text-stroke:0.6px #1f3150">1979</div><div style="left:-417.5px;width:1000px;text-align:right;top:1003.64px;font-size:24px;line-height:24px;color:#151515;font-weight:normal;white-space:pre;-webkit-text-stroke:0.3px #151515">937</div><div style="left:-754px;width:1000px;text-align:right;top:1037.72px;font-size:25px;line-height:25px;color:#1f3150;font-weight:normal;white-space:pre;-webkit-text-stroke:0.6px #1f3150">1980</div><div style="left:-417.5px;width:1000px;text-align:right;top:1038.56px;font-size:24px;line-height:24px;color:#151515;font-weight:normal;white-space:pre;-webkit-text-stroke:0.3px #151515">1,330.00</div><div style="left:-754px;width:1000px;text-align:right;top:1072.64px;font-size:25px;line-height:25px;color:#1f3150;font-weight:normal;white-space:pre;-webkit-text-stroke:0.6px #1f3150">1981</div><div style="left:-417.5px;width:1000px;text-align:right;top:1073.48px;font-size:24px;line-height:24px;color:#151515;font-weight:normal;white-space:pre;-webkit-text-stroke:0.3px #151515">1,800.00</div><div style="left:-754px;width:1000px;text-align:right;top:1107.56px;font-size:25px;line-height:25px;color:#1f3150;font-weight:normal;white-space:pre;-webkit-text-stroke:0.6px #1f3150">1982</div><div style="left:-417.5px;width:1000px;text-align:right;top:1108.40px;font-size:24px;line-height:24px;color:#151515;font-weight:normal;white-space:pre;-webkit-text-stroke:0.3px #151515">1,645.00</div><div style="left:-754px;width:1000px;text-align:right;top:1142.48px;font-size:25px;line-height:25px;color:#1f3150;font-weight:normal;white-space:pre;-webkit-text-stroke:0.6px #1f3150">1983</div><div style="left:-417.5px;width:1000px;text-align:right;top:1143.32px;font-size:24px;line-height:24px;color:#151515;font-weight:normal;white-space:pre;-webkit-text-stroke:0.3px #151515">1,800.00</div><div style="left:-754px;width:1000px;text-align:right;top:1177.40px;font-size:25px;line-height:25px;color:#1f3150;font-weight:normal;white-space:pre;-webkit-text-stroke:0.6px #1f3150">1984</div><div style="left:-417.5px;width:1000px;text-align:right;top:1178.24px;font-size:24px;line-height:24px;color:#151515;font-weight:normal;white-space:pre;-webkit-text-stroke:0.3px #151515">1,970.00</div><div style="left:-754px;width:1000px;text-align:right;top:1212.32px;font-size:25px;line-height:25px;color:#1f3150;font-weight:normal;white-space:pre;-webkit-text-stroke:0.6px #1f3150">1985</div><div style="left:-417.5px;width:1000px;text-align:right;top:1213.16px;font-size:24px;line-height:24px;color:#151515;font-weight:normal;white-space:pre;-webkit-text-stroke:0.3px #151515">2,130.00</div><div style="left:-754px;width:1000px;text-align:right;top:1247.24px;font-size:25px;line-height:25px;color:#1f3150;font-weight:normal;white-space:pre;-webkit-text-stroke:0.6px #1f3150">1986</div><div style="left:-417.5px;width:1000px;text-align:right;top:1248.08px;font-size:24px;line-height:24px;color:#151515;font-weight:normal;white-space:pre;-webkit-text-stroke:0.3px #151515">2,140.00</div><div style="left:-754px;width:1000px;text-align:right;top:1282.16px;font-size:25px;line-height:25px;color:#1f3150;font-weight:normal;white-space:pre;-webkit-text-stroke:0.6px #1f3150">1987</div><div style="left:-417.5px;width:1000px;text-align:right;top:1283.00px;font-size:24px;line-height:24px;color:#151515;font-weight:normal;white-space:pre;-webkit-text-stroke:0.3px #151515">2,570.00</div><div style="left:-754px;width:1000px;text-align:right;top:1317.08px;font-size:25px;line-height:25px;color:#1f3150;font-weight:normal;white-space:pre;-webkit-text-stroke:0.6px #1f3150">1988</div><div style="left:-417.5px;width:1000px;text-align:right;top:1317.92px;font-size:24px;line-height:24px;color:#151515;font-weight:normal;white-space:pre;-webkit-text-stroke:0.3px #151515">3,130.00</div><div style="left:-754px;width:1000px;text-align:right;top:1352.00px;font-size:25px;line-height:25px;color:#1f3150;font-weight:normal;white-space:pre;-webkit-text-stroke:0.6px #1f3150">1989</div><div style="left:-417.5px;width:1000px;text-align:right;top:1352.84px;font-size:24px;line-height:24px;color:#151515;font-weight:normal;white-space:pre;-webkit-text-stroke:0.3px #151515">3,140.00</div><div style="left:-754px;width:1000px;text-align:right;top:1386.92px;font-size:25px;line-height:25px;color:#1f3150;font-weight:normal;white-space:pre;-webkit-text-stroke:0.6px #1f3150">1990</div><div style="left:-417.5px;width:1000px;text-align:right;top:1387.76px;font-size:24px;line-height:24px;color:#151515;font-weight:normal;white-space:pre;-webkit-text-stroke:0.3px #151515">3,200.00</div><div style="left:-754px;width:1000px;text-align:right;top:1421.46px;font-size:25px;line-height:25px;color:#1f3150;font-weight:normal;white-space:pre;-webkit-text-stroke:0.6px #1f3150">1991</div><div style="left:-417.5px;width:1000px;text-align:right;top:1422.30px;font-size:24px;line-height:24px;color:#151515;font-weight:normal;white-space:pre;-webkit-text-stroke:0.3px #151515">3,466.00</div><div style="left:46.4px;top:436px;width:543.6px;height:2.8px;background:#1e7145"></div><div style="left:46.4px;top:436px;width:2.8px;height:1014px;background:#1e7145"></div><div style="left:587px;top:436px;width:3px;height:1014px;background:#1e7145"></div><div style="left:0px;top:1450px;width:1536px;height:38px;background:#e6e6e6"></div><div style="left:0px;top:1450px;width:1536px;height:2px;background:#a8a8a8"></div><div style="left:150px;top:1450px;width:115px;height:38px;background:#fff;border-left:1.5px solid #a8a8a8;border-right:1.5px solid #a8a8a8;box-sizing:border-box"></div><div style="left:150px;top:1485px;width:115px;height:3px;background:#1e7145"></div><div style="left:168px;top:1455.48px;font-size:24px;line-height:24px;color:#1e7145;font-weight:bold;white-space:pre;">Sheet1</div><svg style="position:absolute;left:0;top:0" width="1536" height="1488" viewBox="0 0 1536 1488"><path d="M170 361 H181 L175.5 367.5 Z" fill="#707070"/><rect x="218.5" y="354.5" width="4.4" height="4.4" fill="#a8a8a8"/><rect x="218.5" y="361.5" width="4.4" height="4.4" fill="#a8a8a8"/><rect x="218.5" y="368.5" width="4.4" height="4.4" fill="#a8a8a8"/><path d="M270.5 356.5 L290.5 374 M290.5 356.5 L270.5 374" stroke="#bdbdbd" stroke-width="2.2"/><path d="M336.5 365.5 L344 373 L358.5 356" stroke="#c4c4c4" stroke-width="3" fill="none"/><path d="M44 410 V432 H21 Z" fill="#b4b4b4"/><path d="M48.4 1465 V1477.7 L41 1471.4 Z M83 1465 V1477.7 L90.2 1471.4 Z" fill="#c2c2c2"/><circle cx="327.4" cy="1471.7" r="13.3" fill="none" stroke="#7d7d7d" stroke-width="2"/><path d="M320.3 1471.7 H334.5 M327.4 1464.6 V1478.8" stroke="#7d7d7d" stroke-width="2.6"/></svg><div style="left:400px;top:349.30px;font-size:28px;line-height:28px;color:#555;font-weight:normal;white-space:pre;font-family:'Liberation Serif',serif;font-style:italic;letter-spacing:-1.5px;-webkit-text-stroke:0.6px #555">fx</div><div style="left:1121.5px;top:325.5px;width:383.5px;height:272.5px;background:#fff;border:1px solid #c8c8c8;box-sizing:border-box;box-shadow:1px 3px 6px rgba(0,0,0,0.22)"></div><div style="left:1140.9px;top:341.62px;font-size:21px;line-height:21px;color:#555;font-weight:bold;white-space:pre;letter-spacing:0.088px;">Recommended Charts</div><div style="left:1141.9px;top:380.38px;font-size:22px;line-height:22px;color:#555;font-weight:normal;white-space:pre;letter-spacing:0.028px;">Want us to recommend a good</div><div style="left:1141.9px;top:409.48px;font-size:22px;line-height:22px;color:#555;font-weight:normal;white-space:pre;letter-spacing:-0.365px;">chart to showcase your data?</div><div style="left:1140.9px;top:467.68px;font-size:22px;line-height:22px;color:#555;font-weight:normal;white-space:pre;letter-spacing:-0.19px;">Select data in your worksheet and</div><div style="left:1141.9px;top:496.88px;font-size:22px;line-height:22px;color:#555;font-weight:normal;white-space:pre;letter-spacing:0.033px;">click this button to get a</div><div style="left:1141.9px;top:525.98px;font-size:22px;line-height:22px;color:#555;font-weight:normal;white-space:pre;letter-spacing:-0.175px;">customized set of charts that we</div><div style="left:1141.9px;top:555.08px;font-size:22px;line-height:22px;color:#555;font-weight:normal;white-space:pre;letter-spacing:0.143px;">think will fit best with your data.</div><div style="left:211px;top:98.5px;width:96px;height:64px;border:6px solid #c00000;box-sizing:border-box"></div><svg style="position:absolute;left:0;top:0" width="1536" height="1488" viewBox="0 0 1536 1488"><path d="M1059.5 204.9 V182 L1114.3 213.3 L1059.5 244.2 V221.6 H960.7 A8.35 8.35 0 0 1 960.7 204.9 Z" stroke="#c00000" stroke-width="7.6" fill="none" stroke-linejoin="round"/></svg><div style="left:222.5px;top:8.0px;width:78px;height:78px;background:#c00000;border-radius:50%"></div><div style="left:-238.5px;width:1000px;text-align:center;top:24.21px;font-size:47px;line-height:47px;color:#fff;font-weight:bold;white-space:pre;">2</div><div style="left:862.7px;top:172.5px;width:77px;height:77px;background:#c00000;border-radius:50%"></div><div style="left:401.20000000000005px;width:1000px;text-align:center;top:188.21px;font-size:47px;line-height:47px;color:#fff;font-weight:bold;white-space:pre;">3</div><div style="left:595.5999999999999px;top:754.0px;width:77.4px;height:77.4px;background:#c00000;border-radius:50%"></div><div style="left:134.29999999999995px;width:1000px;text-align:center;top:769.91px;font-size:47px;line-height:47px;color:#fff;font-weight:bold;white-space:pre;">1</div>
</body></html>
